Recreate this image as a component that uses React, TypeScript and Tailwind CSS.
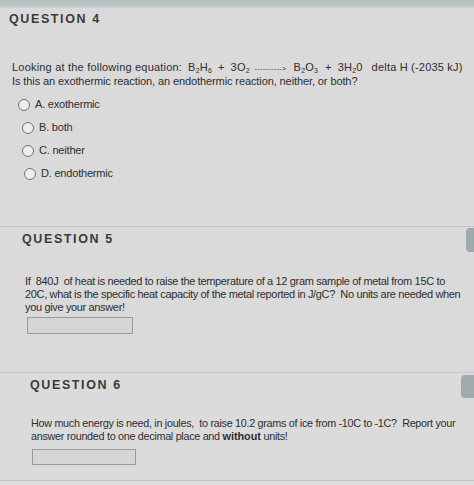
import React from 'react'

function Radio({ label, indent }: { label: string; indent: string }) {
  return (
    <div className={`flex items-center gap-[5px] h-[23px] ${indent}`}>
      <span className="w-[12px] h-[12px] rounded-full border border-[#6f7478] bg-[#eeeeee]"></span>
      <span>{label}</span>
    </div>
  )
}

function Header({ title, indent }: { title: string; indent: string }) {
  return (
    <div className={`h-[24px] flex items-center ${indent}`}>
      <span className="text-[12.5px] font-bold tracking-[1.6px] text-[#3a3a3a]">{title}</span>
    </div>
  )
}

export default function App() {
  return (
    <div
      className="w-[474px] h-[485px] overflow-hidden bg-[#dcdcdb] text-[#2e2e2e] text-[11px] leading-[13px]"
      style={{ fontFamily: '"Liberation Sans", Arial, sans-serif' }}
    >
      {/* top strip */}
      <div className="h-[8px] bg-[#b7c3c3] border-b-2 border-[#c9cfcf]"></div>

      {/* Question 4 */}
      <section className="h-[219px] border-b border-[#c4c4c4] bg-[#dadada]">
        <div className="h-[22px] flex items-center pl-[9px]">
          <span className="text-[12.5px] font-bold tracking-[1.6px] text-[#3a3a3a]">QUESTION 4</span>
        </div>
        <div className="pl-[12px] pt-[31px]">
          <p className="flex items-baseline whitespace-nowrap text-[11px] tracking-[0.2px]">
            <span>Looking at the following equation:</span>
            <span className="ml-[6px]">B<sub className="text-[7px]">2</sub>H<sub className="text-[7px]">6</sub></span>
            <span className="ml-[6px]">+</span>
            <span className="ml-[6px]">3O<sub className="text-[7px]">2</sub></span>
            <span className="ml-[5px] text-[7px] tracking-[0.4px]">----------&gt;</span>
            <span className="ml-[7px]">B<sub className="text-[7px]">2</sub>O<sub className="text-[7px]">3</sub></span>
            <span className="ml-[7px]">+</span>
            <span className="ml-[6px]">3H<sub className="text-[7px]">2</sub>0</span>
            <span className="ml-[9px]">delta H (-2035 kJ)</span>
          </p>
          <p className="tracking-[-0.1px]">Is this an exothermic reaction, an endothermic reaction, neither, or both?</p>
        </div>
        <div className="pt-[5px] tracking-[-0.2px]">
          <Radio label="A. exothermic" indent="pl-[18px]" />
          <Radio label="B. both" indent="pl-[22px]" />
          <Radio label="C. neither" indent="pl-[22px]" />
          <Radio label="D. endothermic" indent="pl-[24px]" />
        </div>
      </section>

      {/* Question 5 */}
      <section className="relative h-[146px] border-b border-[#c4c4c4] bg-[#d9dad9]">
        <div className="absolute right-0 top-[1px] w-[8px] h-[24px] bg-[#9eaaac] rounded-l-sm"></div>
        <Header title="QUESTION 5" indent="pl-[22px]" />
        <div className="pl-[25px] pr-[8px] pt-[24px] tracking-[-0.35px]">
          <p>
            If&nbsp; 840J&nbsp; of heat is needed to raise the temperature of a 12 gram sample of metal from 15C to 20C, what is the specific heat capacity of the metal reported in J/gC?&nbsp; No units are needed when you give your answer!
          </p>
          <div className="mt-[3px] ml-[2px] w-[106px] h-[17px] border border-[#9a9a9a] bg-[#d6d6d6]"></div>
        </div>
      </section>

      {/* Question 6 */}
      <section className="relative h-[108px] border-b border-[#c4c4c4] bg-[#dbdbdb]">
        <div className="absolute right-0 top-[2px] w-[13px] h-[23px] bg-[#9fabad] rounded-l-sm"></div>
        <Header title="QUESTION 6" indent="pl-[30px]" />
        <div className="pl-[31px] pr-[14px] pt-[20px] text-[10.8px] tracking-[-0.3px]">
          <p>
            How much energy is need, in joules,&nbsp; to raise 10.2 grams of ice from -10C to -1C?&nbsp; Report your answer rounded to one decimal place and <b className="tracking-normal">without</b> units!
          </p>
          <div className="mt-[6px] ml-[1px] w-[104px] h-[16px] border border-[#9a9a9a] bg-[#d6d6d6]"></div>
        </div>
      </section>
    </div>
  )
}
